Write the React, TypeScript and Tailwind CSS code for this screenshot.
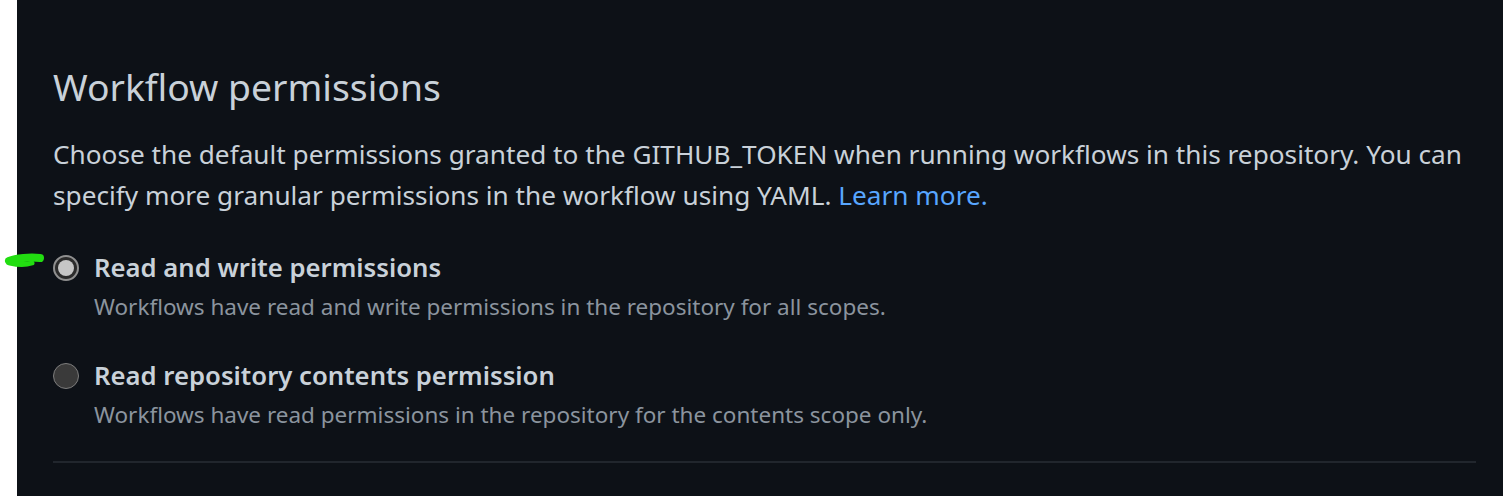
import React from "react";

type Option = {
  id: string;
  label: string;
  description: string;
  checked: boolean;
};

const options: Option[] = [
  {
    id: "write",
    label: "Read and write permissions",
    description: "Workflows have read and write permissions in the repository for all scopes.",
    checked: true,
  },
  {
    id: "read",
    label: "Read repository contents permission",
    description: "Workflows have read permissions in the repository for the contents scope only.",
    checked: false,
  },
];

function Radio({ checked }: { checked: boolean }) {
  if (checked) {
    return (
      <span className="flex h-[26px] w-[26px] shrink-0 items-center justify-center rounded-full border-2 border-[#8f8f8f] bg-[#2b2b2b]">
        <span className="h-[16px] w-[16px] rounded-full bg-[#c6c6c6]" />
      </span>
    );
  }
  return <span className="h-[26px] w-[26px] shrink-0 rounded-full border-[1.5px] border-[#7d7d7d] bg-[#3a3a3a]" />;
}

export default function App() {
  return (
    <div className="relative flex min-h-[496px] bg-white font-['Noto_Sans',sans-serif]">
      {/* hand-drawn marker from the screenshot */}
      <svg className="absolute left-0 top-[250px]" width="48" height="20" viewBox="0 0 48 20">
        <path
          d="M9 11 C 16 8, 30 7, 40 8"
          stroke="#22dd11"
          strokeWidth="8"
          strokeLinecap="round"
          fill="none"
        />
        <path d="M10 13 C 18 15, 26 15, 32 13" stroke="#22dd11" strokeWidth="5" strokeLinecap="round" fill="none" />
      </svg>

      <div className="w-[17px] shrink-0 bg-white" />

      <div className="flex-1 bg-[#0d1117] pl-[36px] pr-[27px] pt-[63px]">
        <h2 className="text-[37.3px] font-normal leading-[48px] text-[#c9d1d9]">Workflow permissions</h2>

        <p className="mt-[23px] text-[26.2px] leading-[41px] text-[#c9d1d9]">
          Choose the default permissions granted to the GITHUB_TOKEN when running workflows in this repository. You can
          specify more granular permissions in the workflow using YAML. <span className="text-[#58a6ff]">Learn more.</span>
        </p>

        <div className="mt-[34px] flex flex-col gap-[35px]">
          {options.map((option) => (
            <div key={option.id} className="flex items-start gap-[15px]">
              <span className="flex h-[36px] items-center">
                <Radio checked={option.checked} />
              </span>
              <span className="flex flex-col">
                <span className="text-[25.7px] font-semibold leading-[36px] text-[#c9d1d9]">{option.label}</span>
                <span className="mt-[5px] text-[22.5px] leading-[32px] text-[#8b949e]">{option.description}</span>
              </span>
            </div>
          ))}
        </div>

        <div className="mt-[30px] h-[2px] bg-[#21262d]" />
      </div>
    </div>
  );
}
